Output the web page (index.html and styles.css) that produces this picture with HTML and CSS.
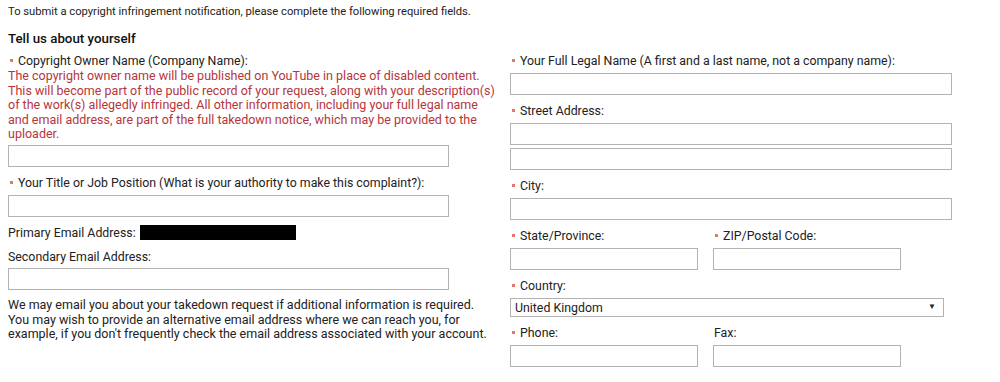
FILE: index.html
```html
<!DOCTYPE html>
<html lang="en">
<head>
    <meta charset="UTF-8" />
    <title>Copyright infringement notification</title>
    <link rel="stylesheet" href="styles.css">
</head>
<body>
    <div class="page">
        <p class="intro">To submit a copyright infringement notification, please complete the following required fields.</p>
        <h2 class="title">Tell us about yourself</h2>
        <div class="cols">
            <div class="col col-l">
                <div class="field">
                    <label class="req">Copyright Owner Name (Company Name):</label>
                    <p class="warn">The copyright owner name will be published on YouTube in place of disabled content. This will become part of the public record of your request, along with your description(s) of the work(s) allegedly infringed. All other information, including your full legal name and email address, are part of the full takedown notice, which may be provided to the uploader.</p>
                    <input type="text" class="txt txt-l txt-tight">
                </div>
                <div class="field">
                    <label class="req">Your Title or Job Position (What is your authority to make this complaint?):</label>
                    <input type="text" class="txt txt-l">
                </div>
                <div class="field">
                    <label>Primary Email Address: <span class="hidden-mail"></span></label>
                </div>
                <div class="field">
                    <label>Secondary Email Address:</label>
                    <input type="text" class="txt txt-l txt-short">
                </div>
                <p class="note">We may email you about your takedown request if additional information is required. You may wish to provide an alternative email address where we can reach you, for example, if you don't frequently check the email address associated with your account.</p>
            </div>
            <div class="col col-r">
                <div class="field">
                    <label class="req">Your Full Legal Name (A first and a last name, not a company name):</label>
                    <input type="text" class="txt">
                </div>
                <div class="field">
                    <label class="req">Street Address:</label>
                    <input type="text" class="txt">
                    <input type="text" class="txt txt-next">
                </div>
                <div class="field">
                    <label class="req">City:</label>
                    <input type="text" class="txt">
                </div>
                <div class="row">
                    <div class="field">
                        <label class="req">State/Province:</label>
                        <input type="text" class="txt txt-s">
                    </div>
                    <div class="field">
                        <label class="req">ZIP/Postal Code:</label>
                        <input type="text" class="txt txt-s">
                    </div>
                </div>
                <div class="field">
                    <label class="req">Country:</label>
                    <div class="sel">
                        <select>
                            <option>United Kingdom</option>
                        </select>
                    </div>
                </div>
                <div class="row">
                    <div class="field">
                        <label class="req">Phone:</label>
                        <input type="text" class="txt txt-s">
                    </div>
                    <div class="field">
                        <label class="fax">Fax:</label>
                        <input type="text" class="txt txt-s">
                    </div>
                </div>
            </div>
        </div>
    </div>
</body>
</html>
```

FILE: styles.css
```css
* {
    margin: 0;
    padding: 0;
    box-sizing: border-box;
}
body {
    background: #fff;
    color: #222;
    font-family: Roboto, "Liberation Sans", Arial, sans-serif;
    font-size: 12.35px;
}
.page {
    padding: 4px 8px;
    width: 1000px;
}
.intro {
    font-size: 11.2px;
    line-height: 16px;
}
.title {
    font-size: 13.3px;
    font-weight: 500;
    line-height: 18px;
    margin-top: 10px;
    color: #111;
}
.cols {
    display: flex;
    gap: 12px;
    margin-top: 5px;
}
.col-l {
    width: 490px;
}
.col-r {
    width: 450px;
}
.field {
    margin-bottom: 8px;
}
.field label {
    display: block;
    line-height: 16px;
    white-space: nowrap;
}
.req::before {
    content: "";
    display: inline-block;
    width: 3px;
    height: 3px;
    background: #e8746f;
    vertical-align: middle;
    margin: 0 5px 2px 2px;
}
.warn {
    color: #b5363c;
    font-size: 12.5px;
    line-height: 14.6px;
}
.txt {
    display: block;
    height: 22px;
    width: 442px;
    margin-top: 4px;
    border: 1px solid #b3b3b3;
    background: #fff;
    font: inherit;
    padding: 0 4px;
}
.txt-l {
    width: 441px;
}
.txt-tight {
    margin-top: 3px;
}
.txt-short {
    margin-top: 3px;
}
.txt-next {
    margin-top: 3px;
}
.txt-s {
    width: 188px;
}
.row {
    display: flex;
    gap: 15px;
}
.row .field {
    width: 188px;
}
.fax {
    padding-left: 1px;
}
.hidden-mail {
    display: inline-block;
    width: 156px;
    height: 15px;
    background: #000;
    vertical-align: -3px;
    margin-left: 1px;
}
.note {
    font-size: 12.5px;
    line-height: 14.6px;
    margin-top: 1px;
}
.sel {
    position: relative;
    width: 434px;
    margin-top: 4px;
}
.sel select {
    appearance: none;
    -webkit-appearance: none;
    display: block;
    width: 100%;
    height: 19px;
    border: 1px solid #b3b3b3;
    border-radius: 0;
    background: #fff;
    font: inherit;
    color: #222;
    padding: 0 4px;
}
.sel::after {
    content: "\25BC";
    position: absolute;
    right: 8px;
    top: 4px;
    font-size: 8px;
    line-height: 10px;
    color: #222;
    pointer-events: none;
}
```
